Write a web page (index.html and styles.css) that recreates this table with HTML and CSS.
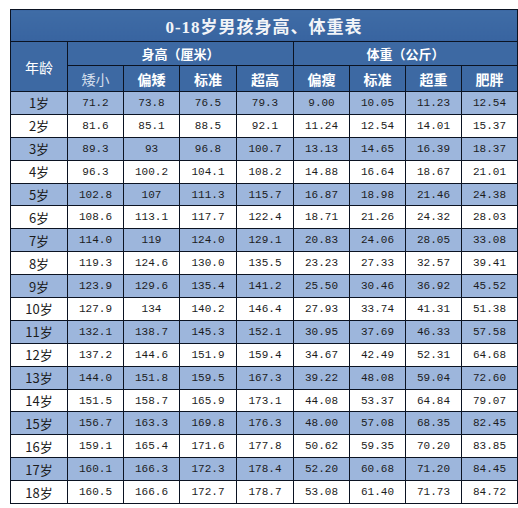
FILE: index.html
```html
<!DOCTYPE html>
<html lang="zh">
<head>
  <meta charset="UTF-8">
  <title>0-18岁男孩身高、体重表</title>
  <link rel="stylesheet" href="styles.css">
</head>
<body>
  <table class="chart">
    <colgroup>
      <col class="c-age">
      <col class="c-num"><col class="c-num"><col class="c-wide"><col class="c-wide">
      <col class="c-num"><col class="c-num"><col class="c-num"><col class="c-num">
    </colgroup>
    <thead>
      <tr class="title-row">
        <th colspan="9">0-18岁男孩身高、体重表</th>
      </tr>
      <tr class="group-row">
        <th rowspan="2" class="age-head">年龄</th>
        <th colspan="4">身高（厘米）</th>
        <th colspan="4">体重（公斤）</th>
      </tr>
      <tr class="sub-row">
        <th class="light">矮小</th>
        <th>偏矮</th>
        <th>标准</th>
        <th>超高</th>
        <th>偏瘦</th>
        <th>标准</th>
        <th>超重</th>
        <th>肥胖</th>
      </tr>
    </thead>
    <tbody>
      <tr><td class="age">1岁</td><td>71.2</td><td>73.8</td><td>76.5</td><td>79.3</td><td>9.00</td><td>10.05</td><td>11.23</td><td>12.54</td></tr>
      <tr><td class="age">2岁</td><td>81.6</td><td>85.1</td><td>88.5</td><td>92.1</td><td>11.24</td><td>12.54</td><td>14.01</td><td>15.37</td></tr>
      <tr><td class="age">3岁</td><td>89.3</td><td>93</td><td>96.8</td><td>100.7</td><td>13.13</td><td>14.65</td><td>16.39</td><td>18.37</td></tr>
      <tr><td class="age">4岁</td><td>96.3</td><td>100.2</td><td>104.1</td><td>108.2</td><td>14.88</td><td>16.64</td><td>18.67</td><td>21.01</td></tr>
      <tr><td class="age">5岁</td><td>102.8</td><td>107</td><td>111.3</td><td>115.7</td><td>16.87</td><td>18.98</td><td>21.46</td><td>24.38</td></tr>
      <tr><td class="age">6岁</td><td>108.6</td><td>113.1</td><td>117.7</td><td>122.4</td><td>18.71</td><td>21.26</td><td>24.32</td><td>28.03</td></tr>
      <tr><td class="age">7岁</td><td>114.0</td><td>119</td><td>124.0</td><td>129.1</td><td>20.83</td><td>24.06</td><td>28.05</td><td>33.08</td></tr>
      <tr><td class="age">8岁</td><td>119.3</td><td>124.6</td><td>130.0</td><td>135.5</td><td>23.23</td><td>27.33</td><td>32.57</td><td>39.41</td></tr>
      <tr><td class="age">9岁</td><td>123.9</td><td>129.6</td><td>135.4</td><td>141.2</td><td>25.50</td><td>30.46</td><td>36.92</td><td>45.52</td></tr>
      <tr><td class="age">10岁</td><td>127.9</td><td>134</td><td>140.2</td><td>146.4</td><td>27.93</td><td>33.74</td><td>41.31</td><td>51.38</td></tr>
      <tr><td class="age">11岁</td><td>132.1</td><td>138.7</td><td>145.3</td><td>152.1</td><td>30.95</td><td>37.69</td><td>46.33</td><td>57.58</td></tr>
      <tr><td class="age">12岁</td><td>137.2</td><td>144.6</td><td>151.9</td><td>159.4</td><td>34.67</td><td>42.49</td><td>52.31</td><td>64.68</td></tr>
      <tr><td class="age">13岁</td><td>144.0</td><td>151.8</td><td>159.5</td><td>167.3</td><td>39.22</td><td>48.08</td><td>59.04</td><td>72.60</td></tr>
      <tr><td class="age">14岁</td><td>151.5</td><td>158.7</td><td>165.9</td><td>173.1</td><td>44.08</td><td>53.37</td><td>64.84</td><td>79.07</td></tr>
      <tr><td class="age">15岁</td><td>156.7</td><td>163.3</td><td>169.8</td><td>176.3</td><td>48.00</td><td>57.08</td><td>68.35</td><td>82.45</td></tr>
      <tr><td class="age">16岁</td><td>159.1</td><td>165.4</td><td>171.6</td><td>177.8</td><td>50.62</td><td>59.35</td><td>70.20</td><td>83.85</td></tr>
      <tr><td class="age">17岁</td><td>160.1</td><td>166.3</td><td>172.3</td><td>178.4</td><td>52.20</td><td>60.68</td><td>71.20</td><td>84.45</td></tr>
      <tr><td class="age">18岁</td><td>160.5</td><td>166.6</td><td>172.7</td><td>178.7</td><td>53.08</td><td>61.40</td><td>71.73</td><td>84.72</td></tr>
    </tbody>
  </table>
</body>
</html>
```

FILE: styles.css
```css
* {
  margin: 0;
  padding: 0;
  box-sizing: border-box;
}

body {
  background-color: #fff;
  padding: 9px 0 0 10px;
  font-family: "Noto Sans CJK SC", sans-serif;
}

.chart {
  border-collapse: collapse;
  table-layout: fixed;
  width: 507px;
  border: 1px solid #0b1322;
}

.c-age {
  width: 57px;
}

.c-num {
  width: 56px;
}

.c-wide {
  width: 57px;
}

.chart th,
.chart td {
  border: 1px solid #0b1322;
  text-align: center;
  vertical-align: middle;
  overflow: hidden;
  white-space: nowrap;
}

.chart th {
  background-color: #3d69a3;
  color: #fff;
  font-size: 14px;
  font-weight: bold;
}

.title-row th {
  height: 32px;
  font-family: "Liberation Serif", "Noto Sans CJK SC", serif;
  font-size: 17px;
  letter-spacing: 1px;
  color: #f2f4f8;
  background-image: linear-gradient(to bottom, #3f6ca6, #3864a0);
}

.group-row th {
  height: 24px;
  font-size: 13px;
}

.sub-row th {
  height: 26px;
}

.chart th.age-head {
  font-weight: normal;
  font-size: 14px;
}

.chart th.light {
  font-weight: normal;
  color: #d3deec;
}

.chart td {
  height: 22.9px;
  font-family: "Liberation Mono", monospace;
  font-size: 11px;
  color: #1c1c1c;
}

.chart td.age {
  font-family: "Noto Sans CJK SC", sans-serif;
  font-size: 13px;
}

.chart tbody tr:nth-child(odd) td {
  background-color: #9db6dc;
}
```
